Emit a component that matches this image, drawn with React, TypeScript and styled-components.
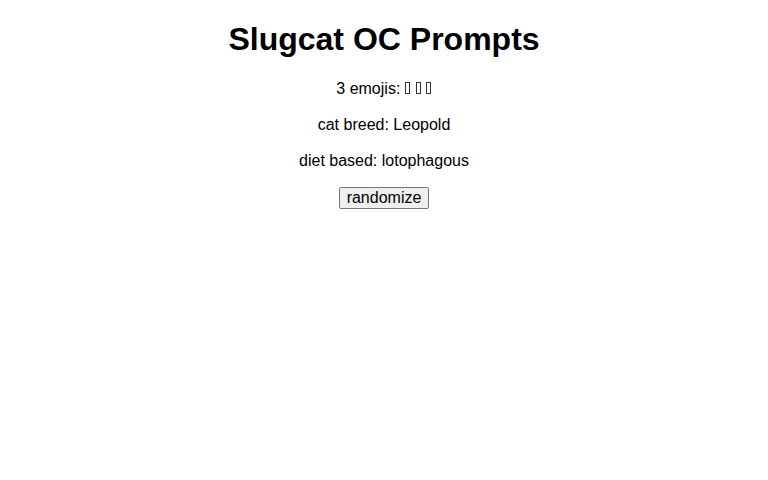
import * as React from "react";
import { useState } from "react";
import styled, { createGlobalStyle } from "styled-components";

const GlobalStyle = createGlobalStyle`
  body {
    margin: 0;
    background: #ffffff;
    color: #000000;
    font-family: "Liberation Sans", Arial, sans-serif;
  }
`;

const Page = styled.div`
  text-align: center;
  padding: 1px 0;
`;

const Title = styled.h1`
  font-size: 32px;
  font-weight: bold;
  margin: 19.5px 0 21.5px;
`;

const Line = styled.p`
  font-size: 16px;
  line-height: 20px;
  margin: 16px 0;
`;

// the reference shows the emojis as missing-glyph boxes
const Tofu = styled.span`
  display: inline-block;
  box-sizing: border-box;
  width: 5px;
  height: 12px;
  margin: 0 0.5px;
  border: 1px solid #333333;
  overflow: hidden;
  color: transparent;
  font-size: 1px;
  line-height: 10px;
  vertical-align: baseline;
`;

const Button = styled.button`
  font-family: "Liberation Sans", Arial, sans-serif;
  font-size: 16px;
  padding: 1px 7px;
  color: #000000;
  background: #efefef;
  border: 1px solid #767676;
  border-radius: 2px;
`;

const EMOJIS = ["🐛", "🐱", "🌧"];
const BREEDS = ["Leopold", "Siamese", "Persian", "Maine Coon", "Bengal"];
const DIETS = ["lotophagous", "carnivorous", "herbivorous", "omnivorous"];

const pick = <T,>(list: T[]) => list[Math.floor(Math.random() * list.length)];

const App = () => {
  const [emojis, setEmojis] = useState(EMOJIS);
  const [breed, setBreed] = useState("Leopold");
  const [diet, setDiet] = useState("lotophagous");

  const randomize = () => {
    setEmojis([pick(EMOJIS), pick(EMOJIS), pick(EMOJIS)]);
    setBreed(pick(BREEDS));
    setDiet(pick(DIETS));
  };

  return (
    <Page>
      <GlobalStyle />
      <Title>Slugcat OC Prompts</Title>
      <Line>
        3 emojis:{" "}
        {emojis.map((e, i) => (
          <React.Fragment key={i}>
            {i > 0 && " "}
            <Tofu>{e}</Tofu>
          </React.Fragment>
        ))}
      </Line>
      <Line>cat breed: {breed}</Line>
      <Line>diet based: {diet}</Line>
      <Button onClick={randomize}>randomize</Button>
    </Page>
  );
};

export default App;
